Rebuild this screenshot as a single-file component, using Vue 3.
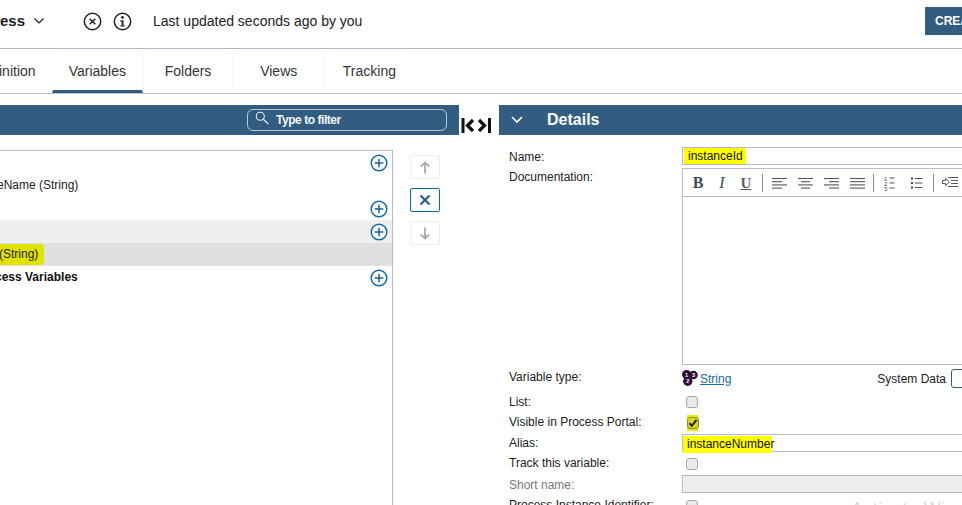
<script setup>
const tabs = [
  { label: 'inition', cls: 'first' },
  { label: 'Variables', cls: 'active' },
  { label: 'Folders', cls: '' },
  { label: 'Views', cls: '' },
  { label: 'Tracking', cls: '' }
]
const rows = [
  { text: '', plus: true, cls: '' },
  { text: 'eName (String)', plus: false, cls: 'cut' },
  { text: '', plus: true, cls: '' },
  { text: '', plus: true, cls: 'soft' },
  { text: '(String)', plus: false, cls: 'selected', mark: true },
  { text: 'cess Variables', plus: true, cls: 'strong' }
]
const aligns = [
  [[0, 15], [0, 10], [0, 15], [0, 10]],
  [[0, 15], [3, 12], [0, 15], [3, 12]],
  [[0, 15], [5, 15], [0, 15], [5, 15]],
  [[0, 15], [0, 15], [0, 15], [0, 15]]
]
</script>

<template>
  <div class="page">
    <header class="top">
      <span class="title">ess</span>
      <svg class="chev" width="12" height="8" viewBox="0 0 12 8"><path d="M1.5 1.5 6 6l4.5-4.5" fill="none" stroke="#222" stroke-width="1.2"/></svg>
      <svg class="round first" width="19" height="19" viewBox="0 0 19 19"><circle cx="9.5" cy="9.5" r="8.2" fill="none" stroke="#222" stroke-width="1.5"/><path d="M6.7 6.7l5.6 5.6M12.3 6.7l-5.6 5.6" stroke="#222" stroke-width="1.5"/></svg>
      <svg class="round" width="19" height="19" viewBox="0 0 19 19"><circle cx="9.5" cy="9.5" r="8.2" fill="none" stroke="#222" stroke-width="1.5"/><circle cx="9.5" cy="5.4" r="1.4" fill="#222"/><path d="M7.3 8.2h3.2v5.2h1.3v1.2H7.2v-1.2h1.4V9.4H7.3z" fill="#222"/></svg>
      <span class="updated">Last updated seconds ago by you</span>
      <button class="create">CREATE</button>
    </header>

    <nav class="tabs">
      <div v-for="t in tabs" :key="t.label" class="tab" :class="t.cls">{{ t.label }}</div>
    </nav>

    <main class="body">
      <section class="left">
        <div class="band filterband">
          <div class="filter">
            <svg width="14" height="14" viewBox="0 0 14 14"><circle cx="5.3" cy="5.3" r="4" fill="none" stroke="#e6edf3" stroke-width="1.1"/><path d="M8.3 8.3l5 4.7" stroke="#e6edf3" stroke-width="1.2"/></svg>
            <span>Type to filter</span>
          </div>
        </div>
        <div class="leftbody">
          <div class="list">
            <div v-for="(r, i) in rows" :key="i" class="row" :class="r.cls">
              <span class="rowtext" :class="{ mark: r.mark }">{{ r.text }}</span>
              <svg v-if="r.plus" width="18" height="18" viewBox="0 0 18 18"><circle cx="9" cy="9" r="7.8" fill="#fff" stroke="#0f6ba3" stroke-width="1.5"/><path d="M9 4.7v8.6M4.7 9h8.6" stroke="#1d5f8e" stroke-width="1.5"/></svg>
            </div>
          </div>
          <div class="moves">
            <button class="mv"><svg width="12" height="13" viewBox="0 0 12 13"><path d="M6 12.5V1.5M1.8 5.7 6 1.5l4.2 4.2" fill="none" stroke="#a9a9a9" stroke-width="1.8"/></svg></button>
            <button class="mv on"><svg width="12" height="12" viewBox="0 0 12 12"><path d="M1.5 1.5l9 9M10.5 1.5l-9 9" stroke="#325c80" stroke-width="2.2"/></svg></button>
            <button class="mv"><svg width="12" height="13" viewBox="0 0 12 13"><path d="M6 .5v11M1.8 7.3 6 11.5l4.2-4.2" fill="none" stroke="#a9a9a9" stroke-width="1.8"/></svg></button>
          </div>
        </div>
      </section>

      <div class="toggle">
        <svg width="30" height="17" viewBox="0 0 30 17"><path d="M0.5 1h3v15h-3zM30 1h-3v15h3z" fill="#111"/><path d="M12 3 6.5 8.5 12 14M18 3l5.5 5.5L18 14" fill="none" stroke="#111" stroke-width="3.2"/></svg>
      </div>

      <section class="right">
        <div class="band detailband">
          <svg width="12" height="8" viewBox="0 0 12 8"><path d="M1 1l5 5 5-5" fill="none" stroke="#fff" stroke-width="1.6"/></svg>
          <span>Details</span>
        </div>
        <div class="form">
          <div class="f name">
            <label>Name:</label>
            <div class="field"><span class="hl">instanceId</span></div>
          </div>
          <div class="f doc">
            <label>Documentation:</label>
            <div class="editor">
              <div class="toolbar">
                <span class="tb g bold">B</span>
                <span class="tb g ital">I</span>
                <span class="tb g under">U</span>
                <i class="sep"></i>
                <svg v-for="(a, k) in aligns" :key="k" class="tb al" width="16" height="14" viewBox="0 0 16 14">
                  <path v-for="(l, n) in a" :key="n" :d="`M${l[0]} ${2.5 + n * 3.2}H${l[1]}`" stroke="#555" stroke-width="1.1"/>
                </svg>
                <i class="sep s2"></i>
                <svg class="tb ol" width="16" height="16" viewBox="0 0 16 16"><path d="M5.5 3h5M5.5 8h5M5.5 13h5" stroke="#555" stroke-width="1.1"/><text x="0" y="5.5" class="mini">1</text><text x="0" y="10.5" class="mini">2</text><text x="0" y="15.5" class="mini">3</text></svg>
                <svg class="tb ul" width="16" height="16" viewBox="0 0 16 16"><path d="M4 3.5h7.5M4 8h7.5M4 12.5h7.5" stroke="#555" stroke-width="1.1"/><path d="M0 2.5h2v2H0zM0 7h2v2H0zM0 11.5h2v2H0z" fill="#444"/></svg>
                <i class="sep s3"></i>
                <svg class="tb" width="16" height="14" viewBox="0 0 16 14"><path d="M6 1.5h10M9 4.5h7M9 7.5h7M6 10.5h10" stroke="#555" stroke-width="1.1"/><path d="M0.5 4.5h3V2.3L7.5 6l-4 3.7V7.5h-3z" fill="#fff" stroke="#555"/></svg>
              </div>
            </div>
          </div>
          <div class="f type">
            <label>Variable type:</label>
            <div class="typeval">
              <svg width="16" height="16" viewBox="0 0 16 16">
                <circle cx="4.6" cy="4.6" r="4.6" fill="#2e0f38"/><circle cx="11.5" cy="5" r="4.3" fill="#2e0f38"/><circle cx="5.8" cy="11.2" r="4.7" fill="#2e0f38"/>
                <text x="4.6" y="6.6" class="num">1</text><text x="11.5" y="7" class="num">3</text><text x="5.8" y="13.2" class="num">2</text>
              </svg>
              <a class="link">String</a>
              <span class="sys">System Data</span>
              <span class="sysbox"></span>
            </div>
          </div>
          <div class="f check gapped"><label>List:</label><span class="cb"></span></div>
          <div class="f check visible up">
            <label>Visible in Process Portal:</label>
            <span class="cbmark"><span class="cb"><svg width="10" height="10" viewBox="0 0 10 10"><path d="M1.5 5.2l2.4 2.6 4.6-6" fill="none" stroke="#222" stroke-width="2"/></svg></span></span>
          </div>
          <div class="f alias">
            <label>Alias:</label>
            <div class="field"><span class="hl wide">instanceNumber</span></div>
          </div>
          <div class="f check up"><label>Track this variable:</label><span class="cb"></span></div>
          <div class="f short">
            <label class="dim">Short name:</label>
            <div class="field off"></div>
          </div>
          <div class="f check last up"><label>Process Instance Identifier:</label><span class="cb"></span></div>
        </div>
        <div class="watermark">Activate Windows</div>
      </section>
    </main>
  </div>
</template>

<style scoped>
.page {
  width: 962px;
  height: 505px;
  overflow: hidden;
  position: relative;
  background: #fff;
  font-family: "Liberation Sans", Arial, sans-serif;
  font-size: 12px;
  color: #222;
}
.top {
  height: 48px;
  display: flex;
  align-items: center;
  border-bottom: 1px solid #b3bac1;
}
.title { font-size: 15px; font-weight: 700; color: #1d1d1d; margin-top: -7px; width: 26px; }
.chev { margin: -7px 0 0 7px; }
.round { margin: -6px 0 0 11px; }
.round.first { margin-left: 38px; }
.updated { margin: -7px 0 0 21px; font-size: 14px; color: #222; }
.create {
  position: absolute;
  left: 925px;
  top: 7px;
  width: 70px;
  height: 28px;
  border: 0;
  padding: 0 0 0 10px;
  text-align: left;
  background: #325c80;
  color: #fff;
  font: 700 12px "Liberation Sans", Arial, sans-serif;
}
.tabs {
  height: 44px;
  display: flex;
  border-bottom: 1px solid #bcbfc4;
  padding-left: 52px;
  position: relative;
}
.tab {
  width: 90.7px;
  box-sizing: border-box;
  text-align: center;
  font-size: 14px;
  color: #333;
  border: 1px solid #fbfbfb;
  border-bottom: 0;
  border-radius: 6px 6px 0 0;
  line-height: 42px;
  position: relative;
}
.tab.first {
  position: absolute;
  left: -1px;
  width: 52px;
  text-align: left;
  border: 0;
  line-height: 44px;
}
.tab.active { border-bottom: 3px solid #325c80; height: 44px; }
.body { display: flex; margin-top: 11px; height: 400px; }
.band { height: 30px; background: #325c80; color: #fff; display: flex; align-items: center; }
.left { width: 459px; flex: none; }
.filterband { padding-left: 247px; }
.filter {
  width: 200px;
  height: 22px;
  box-sizing: border-box;
  border: 1px solid #b9c6d2;
  border-radius: 6px;
  display: flex;
  align-items: center;
  padding-left: 7px;
  gap: 7px;
  font-weight: 700;
  font-size: 12px;
  letter-spacing: -0.45px;
  color: #f2f5f8;
}
.filter svg { margin-top: -4px; }
.leftbody { display: flex; margin-top: 15px; }
.list {
  width: 393px;
  height: 360px;
  box-sizing: border-box;
  border-top: 1px solid #b4bccb;
  border-right: 1px solid #b4bccb;
  flex: none;
}
.row {
  height: 23px;
  display: flex;
  align-items: center;
  padding-right: 4px;
}
.row svg { margin-left: auto; }
.row.soft { background: #efefef; }
.row.selected { background: #e0e0e0; }
.row.strong { font-weight: 700; color: #111; }
.rowtext { white-space: nowrap; margin-top: -2px; }
.row.strong .rowtext { margin-left: -5px; }
.row.cut .rowtext { margin-left: -3px; }
.rowtext.mark {
  background: #e2e200;
  margin: 0 0 0 -1px;
  padding: 3px 6px 3px 0;
  border-radius: 0 4px 4px 0;
  line-height: 15px;
}
.moves { display: flex; flex-direction: column; margin: 5px 0 0 17px; gap: 9px; }
.mv {
  width: 30px;
  height: 24px;
  padding: 0;
  background: #fff;
  border: 1px solid #eee;
  border-radius: 2px;
  display: flex;
  align-items: center;
  justify-content: center;
}
.mv.on { border-color: #0f6ba3; }
.toggle { width: 40px; flex: none; padding: 12px 0 0 2px; box-sizing: border-box; }
.toggle svg { display: block; }
.right { flex: 1; min-width: 0; position: relative; }
.detailband { padding-left: 12px; }
.detailband span { font-size: 16px; font-weight: 700; margin-left: 24px; }
.form { padding-left: 10px; margin-top: 12px; }
.f { display: flex; }
.f label { width: 173px; flex: none; }
.f.name { height: 18px; align-items: center; }
.name label { padding-top: 1px; }
.field {
  flex: 1;
  margin-right: -10px;
  box-sizing: border-box;
  border: 1px solid #b4bccb;
  height: 18px;
  background: #fff;
  display: flex;
  align-items: center;
  line-height: 16px;
}
.hl { background: #ffff00; padding: 0 3px 0 4px; height: 16px; color: #111; }
.field .hl { margin-left: 1px; }
.doc { margin-top: 3px; height: 197px; }
.doc label { padding-top: 2px; }
.editor {
  flex: 1;
  margin-right: -10px;
  box-sizing: border-box;
  border: 1px solid #b4bccb;
  height: 197px;
}
.toolbar {
  height: 27px;
  border-bottom: 1px solid #b4bccb;
  display: flex;
  align-items: center;
  padding-left: 7px;
  gap: 8px;
  overflow: hidden;
  white-space: nowrap;
}
.tb { flex: none; }
.tb.al { margin-left: 2px; }
.sep + .tb.al { margin-left: 1px; }
.tb.ol { margin-left: 2px; }
.tb.ul { margin-left: 3px; }
.g { width: 16px; text-align: center; font-family: "Liberation Serif", serif; font-size: 16px; line-height: 16px; color: #3c4a58; }
.bold { font-weight: 700; }
.ital { font-style: italic; }
.under { text-decoration: underline; font-weight: 700; font-size: 15px; color: #5c6064; }
.sep { width: 1px; height: 18px; background: #888; flex: none; }
.sep.s2 { margin-left: -1px; }
.sep.s3 { margin-left: -2px; }
.mini { font: 6px "Liberation Sans", sans-serif; fill: #444; }
.type { margin-top: 4px; height: 19px; }
.type label { padding-top: 1px; }
.typeval { flex: 1; display: flex; align-items: center; position: relative; }
.typeval svg { margin-top: -1px; }
.num { font: 700 5.5px "Liberation Sans", sans-serif; fill: #fff; text-anchor: middle; }
.link { color: #1b6b9e; text-decoration: underline; margin-left: 2px; }
.sys { margin-left: auto; margin-right: 5px; }
.sysbox {
  width: 31px;
  margin-right: -20px;
  height: 19px;
  box-sizing: border-box;
  border: 1px solid #325c80;
  border-radius: 3px;
  flex: none;
}
.check { height: 21px; align-items: center; }
.check.up label { margin-top: -2px; }
.gapped { margin-top: 3px; }
.cb {
  width: 12px;
  height: 12px;
  margin-left: 4px;
  box-sizing: border-box;
  border: 1px solid #a8a8a8;
  border-radius: 3px;
  background: #e9e9e9;
  display: flex;
  align-items: center;
  justify-content: center;
}
.cbmark { background: #ecec00; height: 16px; width: 11px; margin-left: 5px; display: flex; align-items: center; justify-content: center; }
.cbmark .cb { margin-left: 0; flex: none; background: #d6d620; border-color: #8c8c30; }
.alias { height: 19px; margin-top: 1px; }
.alias label { padding-top: 2px; }
.alias .field { height: 18px; }
.alias .hl { margin-left: 0; margin-top: 3px; height: 17px; width: 85px; padding: 0 0 0 4px; }
.short { height: 18px; align-items: center; margin-top: 1px; }
.short label { padding-top: 2px; }
.field.off { background: #eee; }
.dim { color: #777; }
.check.last { margin-top: 2px; }
.watermark {
  position: absolute;
  left: 352px;
  top: 394px;
  font-size: 18px;
  color: #d9d9d9;
  letter-spacing: 0.4px;
  white-space: nowrap;
}
</style>
